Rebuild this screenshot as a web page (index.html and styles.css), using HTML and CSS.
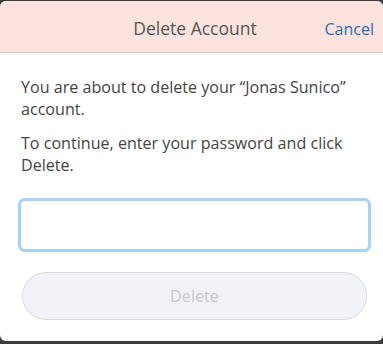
FILE: index.html
```html
<!DOCTYPE html>
<html>
<head>
<meta charset="utf-8">
<link rel="stylesheet" href="styles.css">
</head>
<body>
<div class="dialog">
  <div class="header">
    <div class="title">Delete Account</div>
    <a class="cancel">Cancel</a>
  </div>
  <div class="content">
    <p class="msg">You are about to delete your “Jonas Sunico” account.</p>
    <p class="msg">To continue, enter your password and click Delete.</p>
    <input class="pw" type="password">
    <button class="del">Delete</button>
  </div>
</div>
</body>
</html>
```
FILE: styles.css
```css
html, body {
  margin: 0;
  padding: 0;
  background: #3c3c3c;
  width: 383px;
  height: 344px;
  overflow: hidden;
}
.dialog {
  margin-top: 1px;
  height: 340px;
  background: #ffffff;
  border-radius: 6px;
  overflow: hidden;
  font-family: "Open Sans", "Noto Sans", sans-serif;
  color: #444;
}
.header {
  height: 52px;
  box-sizing: border-box;
  padding-top: 2px;
  background: #fde3dd;
  border-bottom: 1px solid #efcdc6;
  display: flex;
  align-items: center;
  justify-content: center;
  position: relative;
}
.title {
  font-size: 17.5px;
  color: #555;
  padding-left: 7px;
}
.cancel {
  position: absolute;
  right: 9px;
  top: 17px;
  font-size: 16px;
  color: #2d6cb3;
}
.content {
  padding: 23px 12px 0 21px;
  display: flex;
  flex-direction: column;
}
.msg {
  margin: 0 0 12px 0;
  font-size: 16.1px;
  line-height: 22px;
  color: #444;
}
.pw {
  margin: 10px 0 0 -3px;
  width: 353px;
  height: 54px;
  box-sizing: border-box;
  border: 3px solid #a9d0f6;
  border-radius: 7px;
  box-shadow: 0 0 1px #c6e0f8;
  outline: none;
  background: #fff;
}
.del {
  margin: 20px 0 0 1px;
  width: 345px;
  height: 48px;
  box-sizing: border-box;
  border: 1px solid #d9dadf;
  border-radius: 24px;
  background: #f2f3f8;
  color: #c6c7cb;
  font-family: "Open Sans", "Noto Sans", sans-serif;
  font-size: 16.2px;
}
```
